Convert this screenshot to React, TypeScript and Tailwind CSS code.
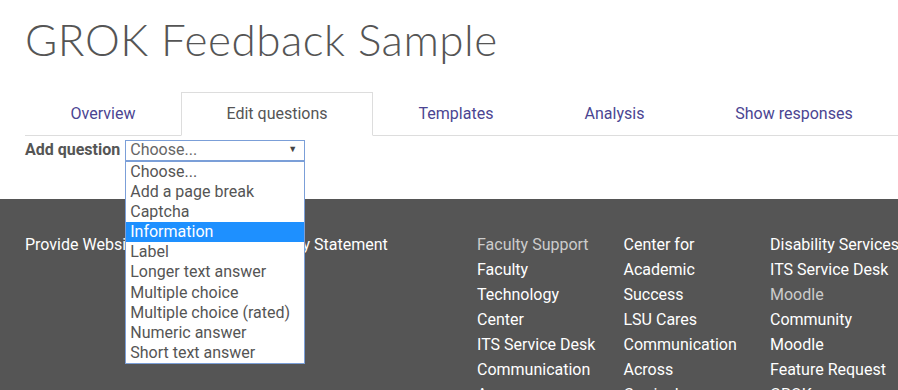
import { useState } from "react";

const tabs = ["Overview", "Edit questions", "Templates", "Analysis", "Show responses"];
const tabWidths = ["w-[156px]", "w-[192px]", "w-[166px]", "w-[151px]", "flex-1"];

const options = [
  "Choose...",
  "Add a page break",
  "Captcha",
  "Information",
  "Label",
  "Longer text answer",
  "Multiple choice",
  "Multiple choice (rated)",
  "Numeric answer",
  "Short text answer",
];

const footerCols = [
  [
    { t: "Faculty Support", head: true },
    { t: "Faculty" },
    { t: "Technology" },
    { t: "Center" },
    { t: "ITS Service Desk" },
    { t: "Communication" },
    { t: "Across" },
  ],
  [
    { t: "Center for" },
    { t: "Academic" },
    { t: "Success" },
    { t: "LSU Cares" },
    { t: "Communication" },
    { t: "Across" },
    { t: "Curriculum" },
  ],
  [
    { t: "Disability Services" },
    { t: "ITS Service Desk" },
    { t: "Moodle", head: true },
    { t: "Community" },
    { t: "Moodle" },
    { t: "Feature Request" },
    { t: "GROK" },
  ],
];

export default function App() {
  const [active] = useState(1);
  const [hover] = useState(3);

  return (
    <div className="w-[898px] h-[390px] overflow-hidden bg-white font-['Roboto',sans-serif] text-[#555]">
      <div className="px-[25px] h-[199px] relative">
        <h1 className="pt-[13px] text-[44px] leading-[52px] font-light font-['Lato',sans-serif] text-[#555] tracking-[0.5px]">
          GROK Feedback Sample
        </h1>

        <div className="mt-[27px] flex border-b border-[#ddd] mr-[-25px]">
          {tabs.map((tab, i) => (
            <div
              key={tab}
              className={
                "h-[43px] flex items-center justify-center text-[16px] " +
                tabWidths[i] +
                (i === active
                  ? " bg-white border border-[#ddd] border-b-white -mb-px h-[44px] text-[#555]"
                  : " text-[#4b4592]")
              }
            >
              {tab}
            </div>
          ))}
        </div>

        <div className="mt-[2px] flex items-center gap-[5px]">
          <span className="font-bold text-[16px] text-[#555]">Add question</span>
          <div className="relative">
            <div className="w-[180px] h-[21px] border border-[#7b9fd8] flex items-center justify-between pl-[4px] pr-[7px] text-[16px] text-[#666]">
              <span>Choose...</span>
              <span className="text-[9px] text-[#444]">▼</span>
            </div>
            <div className="absolute left-0 top-[21px] z-10 w-[180px] bg-white border border-[#7b9fd8]">
              {options.map((o, i) => (
                <div
                  key={o}
                  className={
                    "h-[20.2px] leading-[20px] pl-[4px] text-[16px] " +
                    (i === hover ? "bg-[#1e90ff] text-white" : "text-[#555]")
                  }
                >
                  {o}
                </div>
              ))}
            </div>
          </div>
        </div>
      </div>

      <footer className="bg-[#555] h-[191px] pl-[25px] pt-[33px] flex text-[16px] leading-[25px] text-white">
        <div className="w-[452px] shrink-0 flex gap-[8px]">
          <span>Provide Website Feedback</span>
          <span>Accessibility Statement</span>
        </div>
        <div className="flex shrink-0">
          {footerCols.map((col, ci) => (
            <div key={ci} className={"shrink-0 " + (ci === 2 ? "w-[150px]" : "w-[146.5px]")}>
              {col.map((it, i) => (
                <div key={i} className={"whitespace-nowrap " + (it.head ? "text-[#ccc]" : "text-white")}>
                  {it.t}
                </div>
              ))}
            </div>
          ))}
        </div>
      </footer>
    </div>
  );
}
